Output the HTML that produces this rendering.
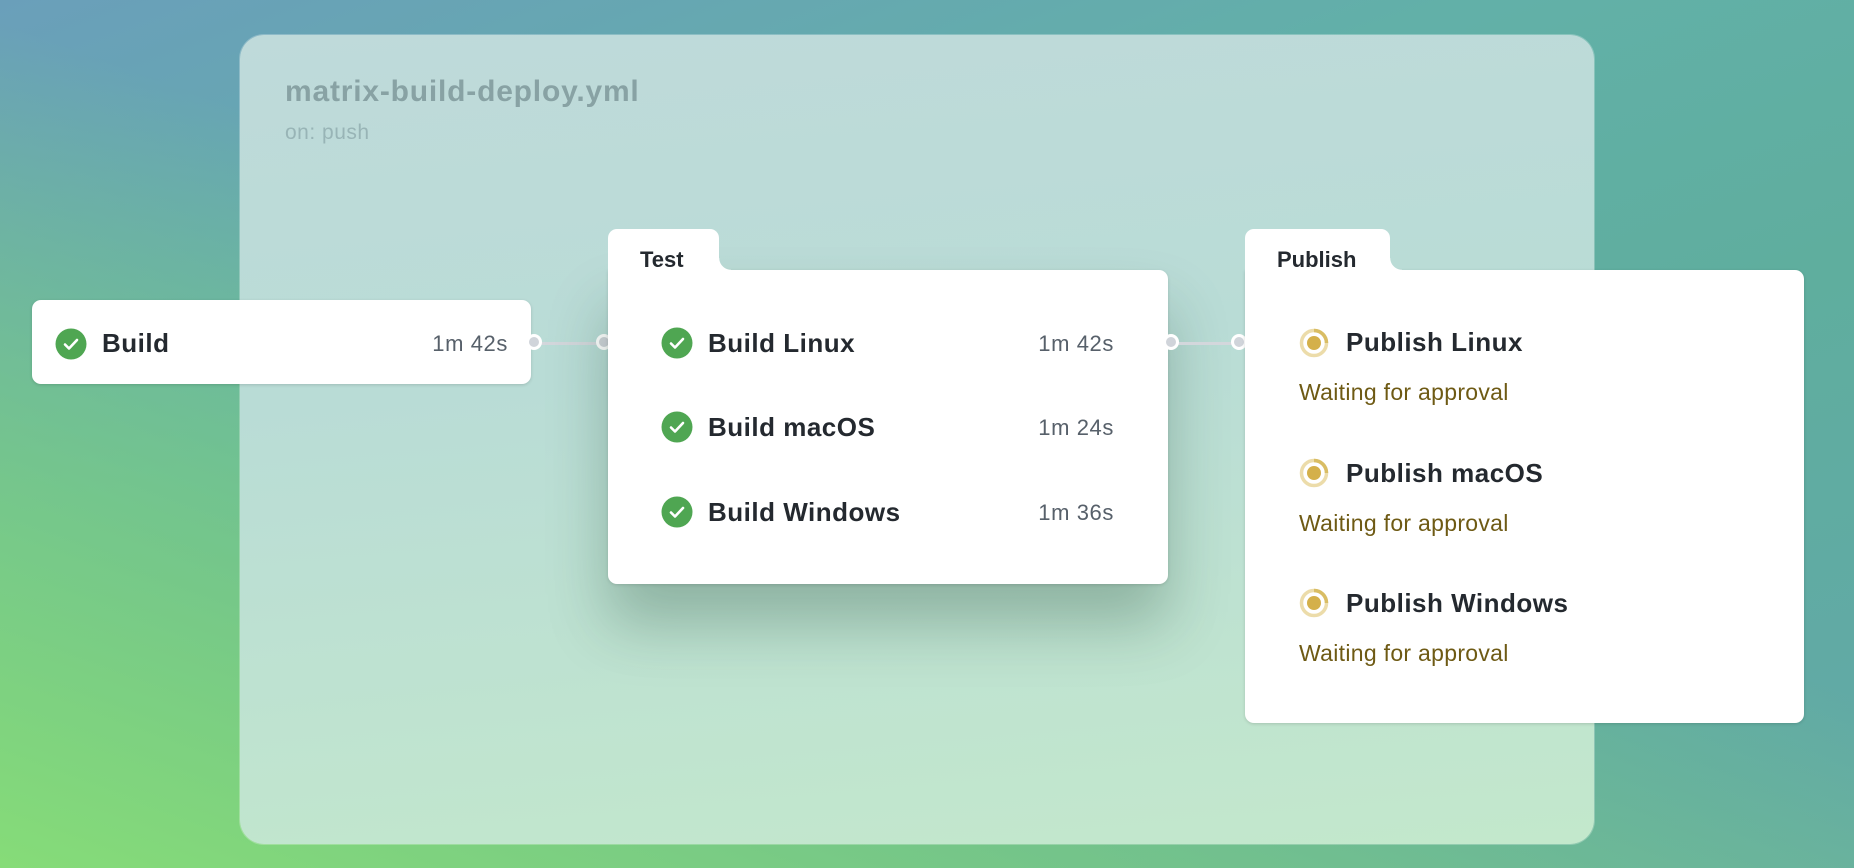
<!DOCTYPE html>
<html><head><meta charset="utf-8"><style>
*{margin:0;padding:0;box-sizing:border-box}
html,body{width:1854px;height:868px;overflow:hidden}
body{position:relative;font-family:"Liberation Sans",sans-serif;
background:linear-gradient(160deg,#6a9fba 0%,#62b0a8 35%,#5fae9e 60%,#62a8a8 100%);}
.bgl{position:absolute;inset:0;background:linear-gradient(20deg,#86dc78 0%,rgba(130,214,120,0.6) 25%,rgba(120,200,130,0) 55%)}
.panel{position:absolute;left:240px;top:35px;width:1354px;height:809px;border-radius:24px;
background:linear-gradient(175deg,#bfdada 0%,#b9dcd6 40%,#c3e8cc 100%);box-shadow:0 0 0 1px rgba(255,255,255,0.25)}
.title{position:absolute;left:285px;top:75px;font-size:30px;letter-spacing:0.8px;font-weight:bold;color:#88a2a4}
.sub{position:absolute;left:285px;top:121px;font-size:21px;letter-spacing:0.5px;color:#98b4b6}
.card{position:absolute;background:#fff;box-shadow:0 1px 3px rgba(0,0,0,0.15)}
.t{position:absolute;font-size:26px;letter-spacing:0.5px;font-weight:bold;color:#24292f;line-height:1}
.tm{position:absolute;font-size:22px;letter-spacing:0.6px;color:#57606a;line-height:1;text-align:right}
.w{position:absolute;font-size:23px;letter-spacing:0.3px;color:#6e5a14;line-height:1}
.dot{position:absolute;width:16px;height:16px;border-radius:50%;background:#d0d4da;border:3px solid #fff}
.line{position:absolute;height:3px;background:#d3d7dc}
.hd{position:absolute;font-size:22px;font-weight:bold;color:#24292f;line-height:1}
svg{position:absolute}
</style></head><body>
<div class="bgl"></div>
<div class="panel"></div>
<div class="title">matrix-build-deploy.yml</div>
<div class="sub">on: push</div>

<div class="card" style="left:32px;top:300px;width:499px;height:84px;border-radius:9px"></div>
<svg style="left:55px;top:328px" width="32" height="32" viewBox="0 0 32 32"><circle cx="16" cy="16" r="15.5" fill="#4fa652"/><path d="M10 16.5l4 4 8-8.5" stroke="#fff" stroke-width="2.6" fill="none" stroke-linecap="round" stroke-linejoin="round"/></svg>
<div class="t" style="left:102px;top:330px">Build</div>
<div class="tm" style="left:380px;top:333px;width:128px">1m 42s</div>

<div class="line" style="left:536px;top:342px;width:70px"></div>
<div class="dot" style="left:526px;top:334px"></div>
<div class="dot" style="left:596px;top:334px"></div>

<div class="card" style="left:608px;top:270px;width:560px;height:314px;border-radius:0 9px 9px 9px;box-shadow:0 1px 3px rgba(0,0,0,0.12),0 40px 60px rgba(20,60,40,0.28)"></div>
<div class="card" style="left:608px;top:229px;width:111px;height:50px;border-radius:9px 9px 0 0;box-shadow:none"></div>
<div style="position:absolute;left:719px;top:258px;width:12px;height:12px;background:radial-gradient(circle at 100% 0,transparent 11.5px,#fff 12px)"></div>
<div class="hd" style="left:640px;top:249px">Test</div>

<svg style="left:661px;top:327px" width="32" height="32" viewBox="0 0 32 32"><circle cx="16" cy="16" r="15.5" fill="#4fa652"/><path d="M10 16.5l4 4 8-8.5" stroke="#fff" stroke-width="2.6" fill="none" stroke-linecap="round" stroke-linejoin="round"/></svg>
<div class="t" style="left:708px;top:330px">Build Linux</div>
<div class="tm" style="left:986px;top:333px;width:128px">1m 42s</div>
<svg style="left:661px;top:411px" width="32" height="32" viewBox="0 0 32 32"><circle cx="16" cy="16" r="15.5" fill="#4fa652"/><path d="M10 16.5l4 4 8-8.5" stroke="#fff" stroke-width="2.6" fill="none" stroke-linecap="round" stroke-linejoin="round"/></svg>
<div class="t" style="left:708px;top:414px">Build macOS</div>
<div class="tm" style="left:986px;top:417px;width:128px">1m 24s</div>
<svg style="left:661px;top:496px" width="32" height="32" viewBox="0 0 32 32"><circle cx="16" cy="16" r="15.5" fill="#4fa652"/><path d="M10 16.5l4 4 8-8.5" stroke="#fff" stroke-width="2.6" fill="none" stroke-linecap="round" stroke-linejoin="round"/></svg>
<div class="t" style="left:708px;top:499px">Build Windows</div>
<div class="tm" style="left:986px;top:502px;width:128px">1m 36s</div>

<div class="line" style="left:1174px;top:342px;width:70px"></div>
<div class="dot" style="left:1163px;top:334px"></div>
<div class="dot" style="left:1231px;top:334px"></div>

<div class="card" style="left:1245px;top:270px;width:559px;height:453px;border-radius:0 9px 9px 9px"></div>
<div class="card" style="left:1245px;top:229px;width:145px;height:50px;border-radius:9px 9px 0 0;box-shadow:none"></div>
<div style="position:absolute;left:1390px;top:258px;width:12px;height:12px;background:radial-gradient(circle at 100% 0,transparent 11.5px,#fff 12px)"></div>
<div class="hd" style="left:1277px;top:249px">Publish</div>

<svg style="left:1298px;top:327px" width="32" height="32" viewBox="0 0 32 32"><circle cx="16" cy="16" r="12.5" fill="none" stroke="#ecdcaa" stroke-width="3.5"/><path d="M16 3.5A12.5 12.5 0 0 1 28.5 16" fill="none" stroke="#d9bd64" stroke-width="3.5"/><circle cx="16" cy="16" r="7" fill="#d4b04a"/></svg>
<div class="t" style="left:1346px;top:329px">Publish Linux</div>
<div class="w" style="left:1299px;top:381px">Waiting for approval</div>

<svg style="left:1298px;top:457px" width="32" height="32" viewBox="0 0 32 32"><circle cx="16" cy="16" r="12.5" fill="none" stroke="#ecdcaa" stroke-width="3.5"/><path d="M16 3.5A12.5 12.5 0 0 1 28.5 16" fill="none" stroke="#d9bd64" stroke-width="3.5"/><circle cx="16" cy="16" r="7" fill="#d4b04a"/></svg>
<div class="t" style="left:1346px;top:460px">Publish macOS</div>
<div class="w" style="left:1299px;top:512px">Waiting for approval</div>

<svg style="left:1298px;top:587px" width="32" height="32" viewBox="0 0 32 32"><circle cx="16" cy="16" r="12.5" fill="none" stroke="#ecdcaa" stroke-width="3.5"/><path d="M16 3.5A12.5 12.5 0 0 1 28.5 16" fill="none" stroke="#d9bd64" stroke-width="3.5"/><circle cx="16" cy="16" r="7" fill="#d4b04a"/></svg>
<div class="t" style="left:1346px;top:590px">Publish Windows</div>
<div class="w" style="left:1299px;top:642px">Waiting for approval</div>
</body></html>
